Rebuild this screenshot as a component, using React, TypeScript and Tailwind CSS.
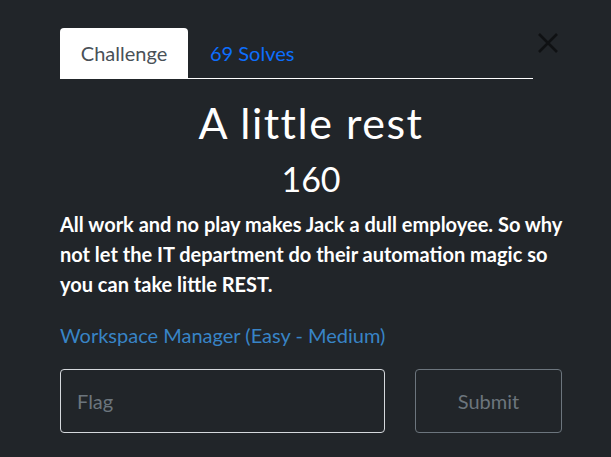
export default function App() {
  return (
    <div className="relative h-[457px] w-[611px] overflow-hidden bg-[#212529] font-['Lato',sans-serif]">
      <button className="absolute left-[538px] top-[33px] text-[#0f1113]">
        <svg width="20" height="20" viewBox="0 0 20 20" fill="none" stroke="currentColor" strokeWidth="2.6">
          <path d="M1 1 19 19M19 1 1 19" />
        </svg>
      </button>

      <div className="pl-[60px] pt-[28px]">
        <div className="flex h-[51px] w-[473px] items-stretch border-b border-white">
          <div className="flex w-[128px] items-center justify-center rounded-t-[4px] bg-white text-[20px] text-[#495057]">
            Challenge
          </div>
          <div className="flex items-center pl-[22px] text-[20px] text-[#0d6efd]">69 Solves</div>
        </div>

        <div className="w-[502px] text-center text-white">
          <h2 className="mt-[18px] text-[43px] leading-[1.2] tracking-[1.5px]">A little rest</h2>
          <h3 className="mt-[10px] text-[34px] leading-[1.2]">160</h3>
        </div>

        <p className="mt-[10px] w-[502px] text-[20px] font-bold leading-[30px] text-white">
          All work and no play makes Jack a dull employee. So why not let the IT department do their
          automation magic so you can take little REST.
        </p>

        <a className="mt-[21px] block text-[20px] leading-[30px] text-[#3884c6]">
          Workspace Manager (Easy - Medium)
        </a>

        <div className="mt-[19px] flex gap-[30px]">
          <div className="flex h-[64px] w-[325px] items-center rounded-[4px] border border-[#d5d8dc] px-[16px] text-[20px] text-[#6c757d]">
            Flag
          </div>
          <div className="flex h-[64px] w-[147px] items-center justify-center rounded-[4px] border border-[#6c757d] text-[20px] text-[#6c757d]">
            Submit
          </div>
        </div>
      </div>
    </div>
  );
}
